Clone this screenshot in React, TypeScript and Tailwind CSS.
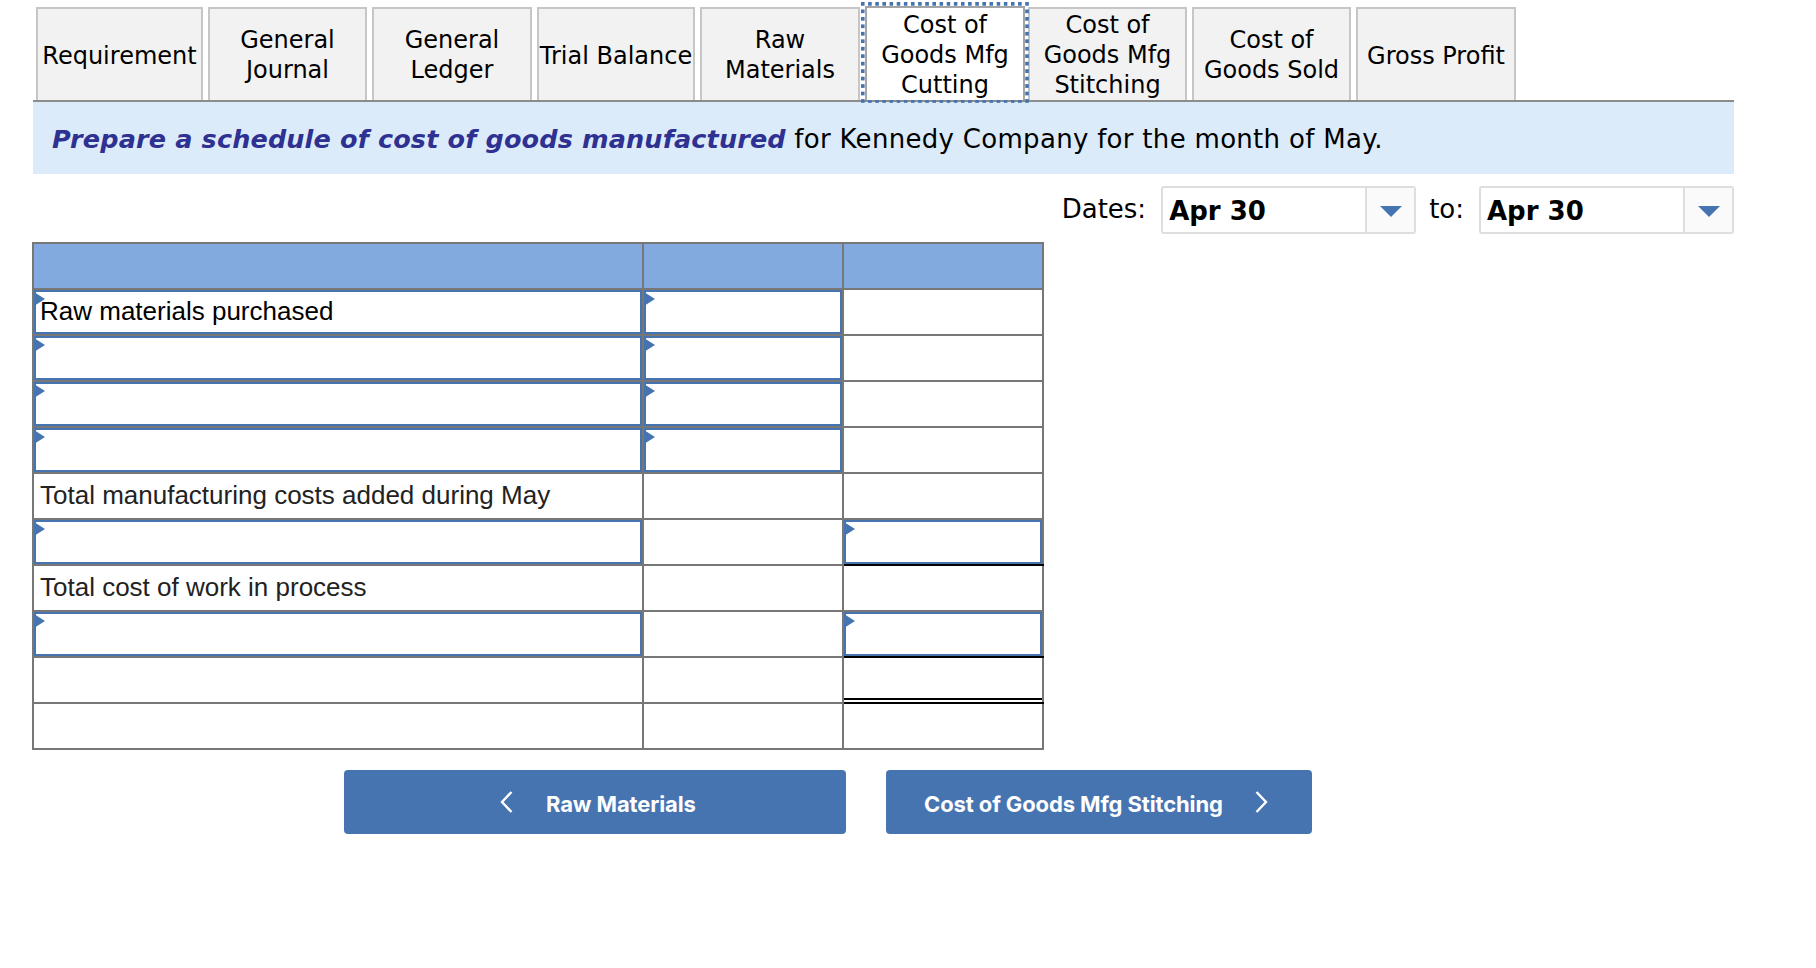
const tabs = [
  { label: ["Requirement"], w: "w-[167px]" },
  { label: ["General", "Journal"], w: "w-[159px]" },
  { label: ["General", "Ledger"], w: "w-[160px]" },
  { label: ["Trial Balance"], w: "w-[158px]" },
  { label: ["Raw", "Materials"], w: "w-[160px]" },
];
const tabsAfter = [
  { label: ["Cost of", "Goods Mfg", "Stitching"], w: "w-[159px]" },
  { label: ["Cost of", "Goods Sold"], w: "w-[159px]" },
  { label: ["Gross Profit"], w: "w-[160px]" },
];

const Tab = ({ label, w }: { label: string[]; w: string }) => (
  <div className={`${w} ${label.length === 1 ? "pt-[3px]" : "pt-[1px]"} h-[93px] shrink-0 flex flex-col items-center justify-center border-2 border-b-0 border-[#c6c6c6] bg-[#f2f2f2] leading-[30px] whitespace-nowrap`}>
    {label.map((l) => (
      <span key={l}>{l}</span>
    ))}
  </div>
);

const Flag = () => (
  <span className="absolute -left-[2px] top-0 w-0 h-0 border-y-[7.5px] border-y-transparent border-l-[11px] border-l-[#4674b1]" />
);

const InputBox = ({ text }: { text?: string }) => (
  <div className="relative h-[44px] border-2 border-[#4674b1] pl-[4px] leading-[38px]">
    <Flag />
    {text}
  </div>
);

const Select = () => (
  <div className="flex w-[255px] h-[48px] border-2 border-[#dedede] rounded-[3px] bg-white">
    <div className="flex-1 pl-[6px] font-bold leading-[47px] text-[26px]">Apr 30</div>
    <div className="w-[49px] flex items-center justify-center border-l-2 border-[#dedede] bg-[#fafafa]">
      <span className="w-0 h-0 mt-[3px] border-x-[11px] border-x-transparent border-t-[11px] border-t-[#4674b1]" />
    </div>
  </div>
);

const cell = "p-0 h-[46px] border-2 border-[#777777] align-middle";
const label = `${cell} pl-[6px] pb-[2px] text-[#222222]`;

const InputRow = ({ text }: { text?: string }) => (
  <tr>
    <td className={cell}><InputBox text={text} /></td>
    <td className={cell}><InputBox /></td>
    <td className={cell}></td>
  </tr>
);

export default function App() {
  return (
    <div className="relative w-[1816px] h-[968px] bg-white text-black font-['DejaVu_Sans',sans-serif] text-[24px] overflow-hidden">
      <div className="ml-[33px] w-[1701px] pt-[7px]">
        {/* tabs */}
        <div className="flex h-[93px] pl-[3px] gap-[5px] text-center">
          {tabs.map((t) => (
            <Tab key={t.label.join()} label={t.label} w={t.w} />
          ))}
          {/* active tab: square dots come from the tiled background showing round the white box */}
          <div className="relative z-10 w-[168px] h-[101px] -mt-[5px] -ml-[4px] -mr-[6px] shrink-0 px-[4px] pt-[4px] pb-[3px] bg-[conic-gradient(from_270deg,#4674b1_25%,transparent_0)] bg-[length:7.15px_7.48px]">
            <div className="h-full flex flex-col items-center justify-center pt-[2px] border-2 border-b-0 border-[#a5a5a5] bg-white leading-[30px]">
              <span>Cost of</span>
              <span>Goods Mfg</span>
              <span>Cutting</span>
            </div>
          </div>
          {tabsAfter.map((t) => (
            <Tab key={t.label.join()} label={t.label} w={t.w} />
          ))}
        </div>

        {/* instructions */}
        <div className="h-[74px] border-t-2 border-[#8c8c8c] bg-[#dcebf9] pl-[19px] leading-[74px] text-[26px] tracking-[0.3px] whitespace-nowrap">
          <b className="italic text-[#2e3192] text-[25.5px] tracking-[0.15px]">Prepare a schedule of cost of goods manufactured</b> for Kennedy Company for the month of May.
        </div>

        {/* dates */}
        <div className="flex justify-end items-center h-[48px] mt-[12px] text-[26px]">
          <span className="mr-[15px] pb-[2px]">Dates:</span>
          <Select />
          <span className="ml-[13px] mr-[15px] pb-[2px]">to:</span>
          <Select />
        </div>
      </div>

      {/* schedule */}
      <table className="ml-[32px] mt-[8px] w-[1010px] table-fixed border-collapse font-['Liberation_Sans',sans-serif] text-[26px]">
        <colgroup>
          <col className="w-[610px]" />
          <col className="w-[200px]" />
          <col className="w-[200px]" />
        </colgroup>
        <tbody>
          <tr className="bg-[#82aade]">
            <td className={cell}></td>
            <td className={cell}></td>
            <td className={cell}></td>
          </tr>
          <InputRow text="Raw materials purchased" />
          <InputRow />
          <InputRow />
          <InputRow />
          <tr>
            <td className={label}>Total manufacturing costs added during May</td>
            <td className={cell}></td>
            <td className={cell}></td>
          </tr>
          <tr>
            <td className={cell}><InputBox /></td>
            <td className={cell}></td>
            <td className={`${cell} border-b-black`}><InputBox /></td>
          </tr>
          <tr>
            <td className={label}>Total cost of work in process</td>
            <td className={cell}></td>
            <td className={cell}></td>
          </tr>
          <tr>
            <td className={cell}><InputBox /></td>
            <td className={cell}></td>
            <td className={`${cell} border-b-black`}><InputBox /></td>
          </tr>
          <tr>
            <td className={cell}></td>
            <td className={cell}></td>
            <td className={`${cell} border-b-black`}>
              <div className="h-[42px] mb-[2px] border-b-2 border-black" />
            </td>
          </tr>
          <tr>
            <td className={cell}></td>
            <td className={cell}></td>
            <td className={cell}></td>
          </tr>
        </tbody>
      </table>

      {/* nav buttons */}
      <div className="flex gap-[40px] ml-[344px] mt-[20px] font-['Inter',sans-serif] text-[22px] font-bold tracking-[-0.12px] text-white">
        <div className="flex items-center gap-[33px] w-[502px] h-[64px] pl-[156px] rounded-[4px] bg-[#4674b1]">
          <svg width="13" height="22" viewBox="0 0 13 22" fill="none" stroke="white" strokeWidth="2.4">
            <path d="M11.5 1 L2 11 L11.5 21" />
          </svg>
          <span className="pt-[4px]">Raw Materials</span>
        </div>
        <div className="flex items-center gap-[32px] w-[426px] h-[64px] pl-[38px] rounded-[4px] bg-[#4674b1]">
          <span className="pt-[4px]">Cost of Goods Mfg Stitching</span>
          <svg width="13" height="22" viewBox="0 0 13 22" fill="none" stroke="white" strokeWidth="2.4">
            <path d="M1.5 1 L11 11 L1.5 21" />
          </svg>
        </div>
      </div>
    </div>
  );
}
